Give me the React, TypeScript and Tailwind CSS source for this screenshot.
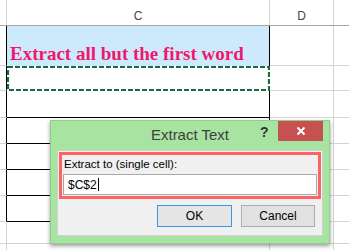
const ui = { fontFamily: '"Liberation Sans", Arial, sans-serif' };
const serif = { fontFamily: '"Liberation Serif", "Times New Roman", serif' };

function Row({
  h,
  stub = "border-[#d4d4d4]",
  c = "",
  children,
  d = "",
}: {
  h: string;
  stub?: string;
  c?: string;
  children?: React.ReactNode;
  d?: string;
}) {
  return (
    <div className={`flex ${h}`}>
      <div className={`w-[7px] shrink-0 border-r border-b border-b-[#d4d4d4] ${stub}`} />
      <div className={`relative w-[263px] shrink-0 ${c}`}>{children}</div>
      <div className={`w-[64px] shrink-0 border-r border-b border-[#d4d4d4] ${d}`} />
      <div className="flex-1 border-b border-[#d4d4d4]" />
    </div>
  );
}

function DashedBox() {
  return (
    <svg className="absolute inset-0" width="263" height="25">
      <rect x="1" y="1" width="261" height="23" fill="none" stroke="#1b6a3f" strokeWidth="2.2" strokeDasharray="5 2" />
    </svg>
  );
}

export default function App() {
  return (
    <div className="relative w-[349px] h-[250px] overflow-hidden bg-white" style={ui}>
      {/* header */}
      <div className="flex h-[26px] border-b border-[#a6a6a6]">
        <div className="w-[7px] shrink-0 border-r border-[#d4d4d4]" />
        <div className="w-[263px] shrink-0 border-r border-[#d4d4d4] pt-[10px] text-center text-[12px] leading-none text-[#444]">C</div>
        <div className="w-[64px] shrink-0 border-r border-[#d4d4d4] pt-[10px] text-center text-[12px] leading-none text-[#444]">D</div>
        <div className="flex-1" />
      </div>

      <Row h="h-[40px]" stub="border-r-black" c="bg-[#cdeafd] border-r border-black flex items-end pl-[3px] pb-[3px]">
        <span className="text-[19px] font-bold leading-none text-[#f0186c] whitespace-nowrap" style={serif}>
          Extract all but the first word
        </span>
      </Row>
      <Row h="h-[25px]" stub="border-r-black">
        <DashedBox />
      </Row>
      <Row h="h-[27px]" stub="border-r-black" c="border-r border-b border-black" />
      <Row h="h-[26px]" stub="border-r-black" c="border-r border-b border-black" />
      <Row h="h-[26px]" stub="border-r-black" c="border-r border-b border-black" />
      <Row h="h-[26px]" stub="border-r-black" c="border-r border-b border-black" />
      <Row h="h-[26px]" stub="border-r-black" c="border-r border-b border-black" />
      <Row h="h-[22px]" c="border-r border-b border-[#d4d4d4]" />
      <Row h="h-[20px]" c="border-r border-[#d4d4d4]" />

      {/* dialog */}
      <div className="absolute left-[50px] top-[120px] w-[280px] h-[124px] border border-[#8fcf89] bg-[#a7e3a1] shadow-[0_2px_4px_rgba(0,0,0,0.4)] flex flex-col">
        <div className="relative h-[29px] shrink-0 flex items-center justify-center text-[15px] text-[#404040]">
          Extract Text
          <span className="absolute left-[209px] top-[4px] text-[14px] font-bold leading-none text-[#333]">?</span>
          <div className="absolute right-[6px] top-0 w-[45px] h-[20px] bg-[#c75050] flex items-center justify-center">
            <svg width="10" height="10" viewBox="0 0 10 10">
              <path d="M1.5 1.5L8.5 8.5M8.5 1.5L1.5 8.5" stroke="white" strokeWidth="2" />
            </svg>
          </div>
        </div>

        <div className="mx-[6px] h-[86px] border border-[#d0d0d0] bg-[#f0f0f0] p-px flex flex-col">
          <div className="border-[3px] border-[#ff6464] h-[47px] px-px flex flex-col">
            <div className="h-[19px] leading-[19px] pl-[1px] text-[11.5px] text-black">Extract to (single cell):</div>
            <div className="h-[21px] border border-[#a9a9a9] bg-white pl-[4px] flex items-center text-[12px] text-black">
              $C$2<span className="inline-block w-px h-[13px] bg-black ml-px" />
            </div>
          </div>
          <div className="mt-[6px] flex justify-end gap-[9px] pr-[6px]">
            <div className="w-[75px] h-[22px] border border-[#3d97e0] bg-[#e5e5e5] flex items-center justify-center text-[12px] text-black">OK</div>
            <div className="w-[74px] h-[22px] border border-[#adadad] bg-[#e1e1e1] flex items-center justify-center text-[12px] text-black">Cancel</div>
          </div>
        </div>
      </div>
    </div>
  );
}
